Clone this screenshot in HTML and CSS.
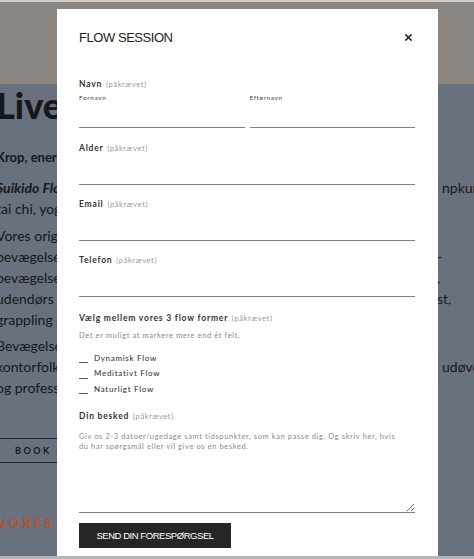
FILE: index.html
```html
<!DOCTYPE html>
<html lang="da">
<head>
<meta charset="utf-8">
<title>Flow Session</title>
<link rel="stylesheet" href="styles.css">
</head>
<body>
<div class="page">
  <div class="topbar"></div>
  <div class="hero"></div>
  <main class="content">
    <h1 class="title">Live Flow</h1>
    <p class="lead">Krop, energi og bevægelse i balance</p>
    <div class="para">
      <div class="row"><span class="left"><b><i>Suikido Flow</i></b> er en unik kombination af bevægelse og kam</span><span class="right far">npkunst</span></div>
      <div class="row"><span class="left">tai chi, yoga og meditation.</span><span class="right"></span></div>
    </div>
    <div class="para">
      <div class="row"><span class="left">Vores originale tilgang kombinerer</span><span class="right"></span></div>
      <div class="row"><span class="left">bevægelse, styrke og fleksibilitet i en helheds</span><span class="right">-</span></div>
      <div class="row"><span class="left">bevægelse, der kan praktiseres indendørs</span><span class="right">,</span></div>
      <div class="row"><span class="left">udendørs og på tværs af stilarter som kampkun</span><span class="right">st,</span></div>
      <div class="row"><span class="left">grappling og dans.</span><span class="right"></span></div>
    </div>
    <div class="para">
      <div class="row"><span class="left">Bevægelse for alle: fra begyndere og</span><span class="right"></span></div>
      <div class="row"><span class="left">kontorfolk til erfarne atleter, kampkunst</span><span class="right far">udøvere</span></div>
      <div class="row"><span class="left">og professionelle.</span><span class="right"></span></div>
    </div>
    <div class="book">BOOK EN SESSION</div>
    <div class="section-title">VORES FLOW FORMER</div>
  </main>
</div>
<div class="bottombar"></div>

<div class="modal">
  <div class="modal-head">
    <h2 class="modal-title">FLOW SESSION</h2>
    <svg class="close" width="7" height="7" viewBox="0 0 7 7"><path d="M1 1L6 6M6 1L1 6" stroke="#222" stroke-width="1.6" stroke-linecap="square"/></svg>
  </div>

  <div class="name-group">
    <span class="field-label">Navn <span class="req">(påkrævet)</span></span>
    <div class="name-row">
      <div class="name-col">
        <span class="sublabel">Fornavn</span>
        <input class="input input-name" type="text">
      </div>
      <div class="name-col">
        <span class="sublabel">Efternavn</span>
        <input class="input input-name" type="text">
      </div>
    </div>
  </div>

  <div class="field">
    <span class="field-label">Alder <span class="req">(påkrævet)</span></span>
    <input class="input" type="text">
  </div>
  <div class="field">
    <span class="field-label">Email <span class="req">(påkrævet)</span></span>
    <input class="input" type="text">
  </div>
  <div class="field">
    <span class="field-label">Telefon <span class="req">(påkrævet)</span></span>
    <input class="input" type="text">
  </div>

  <div class="choice-group">
    <span class="field-label">Vælg mellem vores 3 flow former <span class="req">(påkrævet)</span></span>
    <div class="hint">Det er muligt at markere mere end ét felt.</div>
    <div class="options">
      <div class="option"><span class="box"></span><span class="option-text">Dynamisk Flow</span></div>
      <div class="option"><span class="box"></span><span class="option-text">Meditativt Flow</span></div>
      <div class="option"><span class="box"></span><span class="option-text">Naturligt Flow</span></div>
    </div>
  </div>

  <div class="message-group">
    <span class="field-label">Din besked <span class="req">(påkrævet)</span></span>
    <textarea class="message" placeholder="Giv os 2-3 datoer/ugedage samt tidspunkter, som kan passe dig. Og skriv her, hvis&#10;du har spørgsmål eller vil give os en besked."></textarea>
  </div>

  <button class="submit" type="button">SEND DIN FORESPØRGSEL</button>
</div>
</body>
</html>
```
FILE: styles.css
```css
* { box-sizing: border-box; }

html, body { margin: 0; padding: 0; }

body {
  width: 474px;
  height: 559px;
  overflow: hidden;
  position: relative;
  background: #6a717e;
  font-family: Lato, "Noto Sans", sans-serif;
}

.page {
  height: 556px;
  overflow: hidden;
  background: #6a717e;
}

.topbar { height: 2px; background: #d4d1cd; }
.hero { height: 82px; background: #8b8682; }
.bottombar { height: 3px; background: #b3b5b9; }

.content {
  margin-left: -4px;
  color: #15171c;
}

.title {
  margin: 3px 0 0;
  font-size: 36px;
  line-height: 36px;
  font-weight: 900;
  white-space: nowrap;
}

.lead {
  margin: 24px 0 0;
  font-size: 13px;
  line-height: 21px;
  font-weight: 700;
  white-space: nowrap;
}

.para {
  margin-top: 6px;
  font-size: 14px;
  line-height: 21px;
}
.lead + .para { margin-top: 9px; }
.para + .para + .para { margin-top: 5px; }

.row {
  display: grid;
  grid-template-columns: 441px auto;
  white-space: nowrap;
}
.row .left { overflow: hidden; }
.row .right.far { padding-left: 5px; }

.book {
  margin-top: 40px;
  width: 220px;
  height: 25px;
  border: 1px solid #23252b;
  padding-left: 18px;
  font-size: 9px;
  line-height: 23px;
  font-weight: 700;
  letter-spacing: 2.5px;
  white-space: nowrap;
}

.section-title {
  margin-top: 50px;
  margin-left: 1px;
  font-size: 13px;
  line-height: 20px;
  font-weight: 900;
  letter-spacing: 3px;
  color: #b5522d;
  white-space: nowrap;
}

/* Modal */
.modal {
  position: absolute;
  left: 57px;
  top: 9px;
  width: 381px;
  height: 547px;
  background: #ffffff;
  padding: 21px 23px 0 22px;
  color: #333;
}

.modal-head {
  display: flex;
  justify-content: space-between;
  align-items: center;
  height: 16px;
}

.modal-title {
  margin: 0;
  font-family: "Liberation Sans", Arial, sans-serif;
  font-size: 13px;
  line-height: 16px;
  font-weight: 400;
  letter-spacing: -0.45px;
  color: #222;
}

.close { margin-right: 3px; margin-top: -2px; }

.field-label {
  display: block;
  height: 12px;
  font-size: 8.5px;
  line-height: 12px;
  font-weight: 700;
  letter-spacing: 0.8px;
  color: #333;
  white-space: nowrap;
}

.req {
  font-size: 7.5px;
  line-height: 1;
  font-weight: 400;
  letter-spacing: 0.6px;
  color: #999;
  margin-left: 1px;
}

.name-group { margin-top: 32px; }

.name-row {
  display: grid;
  grid-template-columns: 1fr 1fr;
  gap: 5px;
  margin-top: 3px;
}

.sublabel {
  display: block;
  height: 10px;
  font-size: 6.5px;
  line-height: 10px;
  letter-spacing: 0.6px;
  color: #444;
}

.input {
  display: block;
  width: 100%;
  height: 31px;
  margin: 0;
  padding: 0;
  border: 0;
  border-bottom: 1px solid #808080;
  background: transparent;
  outline: none;
  font: inherit;
}

.input-name { height: 24px; margin-top: 1px; }

.field { margin-top: 13px; }
.name-group + .field { margin-top: 14px; }

.choice-group { margin-top: 15px; }

.hint {
  margin-top: 7px;
  height: 10px;
  font-size: 7.5px;
  line-height: 10px;
  letter-spacing: 0.6px;
  color: #888;
}

.options { margin-top: 9px; }

.option {
  display: flex;
  align-items: center;
  height: 15.5px;
}

.box {
  width: 9px;
  height: 11px;
  border-bottom: 1px solid #555;
  margin-right: 6px;
}

.option-text {
  font-size: 8px;
  line-height: 10px;
  letter-spacing: 0.7px;
  color: #2a2a2a;
}

.message-group { margin-top: 13.5px; }

.message {
  display: block;
  width: 100%;
  height: 87px;
  margin: 4px 0 0;
  padding: 6px 0 0;
  border: 0;
  border-bottom: 1px solid #808080;
  background: transparent;
  outline: none;
  font-family: Lato, "Noto Sans", sans-serif;
  font-size: 7.5px;
  line-height: 10px;
  letter-spacing: 0.6px;
  color: #333;
  resize: vertical;
}
.message::placeholder { color: #8a8a8a; }

.submit {
  display: block;
  margin-top: 10px;
  width: 152px;
  height: 25px;
  border: 0;
  padding: 0;
  background: #262626;
  color: #ffffff;
  font-family: "Liberation Sans", Arial, sans-serif;
  font-size: 9.5px;
  letter-spacing: -0.45px;
}
```
